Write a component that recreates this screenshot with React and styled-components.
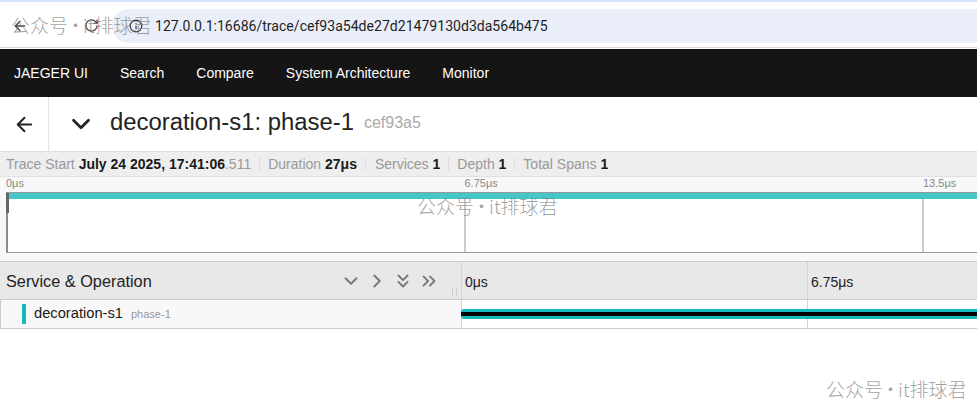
import React from 'react';
import styled, { createGlobalStyle } from 'styled-components';
import { ArrowLeft, ChevronDown, ChevronRight, ChevronsDown, ChevronsRight, Info, RotateCw } from 'lucide-react';

const GlobalStyle = createGlobalStyle`
  html, body {
    margin: 0;
    padding: 0;
    height: 100%;
    background: #fff;
    overflow: hidden;
  }
  body {
    font-family: "Liberation Sans", Arial, sans-serif;
    color: #1a1a1a;
  }
`;

const Page = styled.div`
  position: relative;
  width: 977px;
  height: 405px;
  overflow: hidden;
`;

const BrowserBar = styled.div`
  height: 48px;
  box-sizing: border-box;
  border-top: 2px solid #d3e3fd;
  border-bottom: 1px solid #d8d8d8;
  background: #fff;
  display: flex;
  align-items: center;
  padding: 4px 0 2px 12px;
  color: #474747;
`;

const BrowserIcons = styled.div`
  width: 100px;
  display: flex;
  gap: 56px;
  align-items: center;
`;

const UrlPill = styled.div`
  flex: 1;
  height: 34px;
  margin-right: -20px;
  border-radius: 17px;
  background: #e9eef8;
  display: flex;
  align-items: center;
  gap: 12px;
  padding-left: 17px;
  font-family: "Roboto", "Liberation Sans", sans-serif;
  font-size: 14.07px;
  color: #1f1f1f;
`;

const Nav = styled.nav`
  height: 48px;
  margin-top: 1px;
  background: #151515;
  display: flex;
  align-items: center;
  gap: 32px;
  padding-left: 14px;
  color: #fff;
  font-size: 14px;
`;

const TitleRow = styled.header`
  height: 55px;
  box-sizing: border-box;
  border-bottom: 1px solid #ddd;
  display: flex;
  align-items: center;
  padding-bottom: 5px;
`;

const BackCell = styled.div`
  width: 49px;
  height: 55px;
  margin-bottom: -5px;
  box-sizing: border-box;
  border-right: 1px solid #e4e4e4;
  display: flex;
  align-items: center;
  justify-content: center;
  color: #222;
`;

const TraceTitle = styled.h1`
  margin: 0 0 0 61px;
  font-size: 23.85px;
  font-weight: 400;
  color: #222;
`;

const TitleToggle = styled(ChevronDown)`
  position: absolute;
  left: 66px;
  top: 109px;
  color: #222;
`;

const TraceId = styled.small`
  margin-left: 10px;
  padding-top: 3px;
  font-size: 16px;
  color: #aaa;
`;

const InfoBar = styled.div`
  height: 25px;
  box-sizing: border-box;
  border-bottom: 1px solid #e2e2e2;
  background: #eee;
  display: flex;
  align-items: center;
  padding-left: 6px;
  font-size: 14px;
  color: #999;
`;

const InfoItem = styled.span`
  padding-right: 8px;
  margin-right: 8px;
  border-right: ${({ $last }) => ($last ? 'none' : '1px solid #ddd')};
  line-height: 14px;
  &:nth-child(2) {
    margin-right: 9px;
  }
  b {
    color: #1a1a1a;
  }
`;

const Minimap = styled.section`
  height: 84px;
  box-sizing: border-box;
  background: #f8f8f8;
`;

const TickRow = styled.div`
  height: 15px;
  display: grid;
  grid-template-columns: 458.5px 458.5px 60px;
  padding-left: 6px;
  font-size: 11px;
  line-height: 13px;
  color: #888;
`;

const Canvas = styled.div`
  position: relative;
  height: 61px;
  box-sizing: border-box;
  margin-left: 6px;
  background: #fff;
  border-left: 2px solid #8a8a8a;
  border-top: 1px solid #999;
  border-bottom: 1px solid #999;
  display: grid;
  grid-template-columns: 458px 458px 59px;
`;

const CanvasCell = styled.div`
  border-right: ${({ $line }) => ($line ? '2px solid #ccc' : 'none')};
  box-sizing: border-box;
`;

const CanvasBar = styled.div`
  position: absolute;
  left: 0;
  right: 0;
  top: 0;
  height: 6px;
  background: #45c6c9;
`;

const CanvasHandle = styled.div`
  position: absolute;
  left: -2px;
  top: 0;
  width: 3px;
  height: 20px;
  background: #666;
`;

const TimelineHeader = styled.div`
  height: 39px;
  box-sizing: border-box;
  border-top: 1px solid #ccc;
  border-bottom: 1px solid #ccc;
  background: #e8e8e8;
  display: flex;
`;

const NameColumn = styled.div`
  position: relative;
  width: 462px;
  box-sizing: border-box;
  border-right: 1px solid #d4d4d4;
  display: flex;
  align-items: center;
  justify-content: space-between;
  padding: 2px 21px 0 6px;
  font-size: 16.3px;
  color: #222;
`;

const Collapsers = styled.div`
  display: flex;
  gap: 4px;
  margin-top: -2px;
  color: #777;
`;

const Grip = styled.div`
  position: absolute;
  right: 4px;
  bottom: 3px;
  width: 3px;
  height: 9px;
  border-left: 1px solid #ccc;
  border-right: 1px solid #ccc;
`;

const TimeCell = styled.div`
  width: ${({ $w }) => $w}px;
  box-sizing: border-box;
  border-right: ${({ $line }) => ($line ? '1px solid #d4d4d4' : 'none')};
  display: flex;
  align-items: center;
  padding: 2px 0 0 3px;
  font-size: 14px;
  color: #222;
`;

const SpanRow = styled.div`
  height: 29px;
  box-sizing: border-box;
  border-bottom: 1px solid #ccc;
  display: flex;
`;

const SpanName = styled.div`
  width: 462px;
  box-sizing: border-box;
  background: #f8f8f8;
  border-left: 1px solid #ccc;
  border-right: 1px solid #d4d4d4;
  display: flex;
  align-items: center;
  padding-left: 21px;
`;

const ServiceMark = styled.span`
  width: 4px;
  height: 20px;
  background: #17b8be;
  margin-right: 8px;
`;

const ServiceName = styled.span`
  font-size: 14.7px;
  color: #1a1a1a;
  margin-right: 8px;
  margin-top: -2px;
`;

const OperationName = styled.span`
  font-size: 11px;
  color: #999;
`;

const SpanTrack = styled.div`
  position: relative;
  flex: 1;
  display: flex;
`;

const TrackCell = styled.div`
  width: 346px;
  box-sizing: border-box;
  border-right: 1px solid #d4d4d4;
`;

const SpanBar = styled.div`
  position: absolute;
  left: -1px;
  right: 0;
  top: 9px;
  height: 10px;
  border-radius: 3px 0 0 3px;
  background: #17b8be;
  &::after {
    content: '';
    position: absolute;
    left: 0;
    right: 0;
    top: 3px;
    height: 4px;
    background: #000;
  }
`;

const Watermark = styled.div`
  position: absolute;
  left: ${({ $x }) => $x}px;
  top: ${({ $y }) => $y}px;
  font-family: "Noto Sans CJK SC", "Noto Sans", sans-serif;
  font-size: 19px;
  font-weight: 300;
  line-height: 24px;
  white-space: nowrap;
  color: rgba(120, 120, 120, 0.7);
  pointer-events: none;
  span {
    margin: 0 -2px;
  }
`;

const mark = (
  <>
    公众号<span>·</span>it排球君
  </>
);

export default function App() {
  return (
    <Page>
      <GlobalStyle />
      <BrowserBar>
        <BrowserIcons>
          <ArrowLeft size={16} />
          <RotateCw size={15} />
        </BrowserIcons>
        <UrlPill>
          <Info size={14} color="#333" />
          127.0.0.1:16686/trace/cef93a54de27d21479130d3da564b475
        </UrlPill>
      </BrowserBar>
      <Nav>
        <span>JAEGER UI</span>
        <span>Search</span>
        <span>Compare</span>
        <span>System Architecture</span>
        <span>Monitor</span>
      </Nav>
      <TitleRow>
        <BackCell>
          <ArrowLeft size={23} strokeWidth={2} />
        </BackCell>
        <TitleToggle size={30} strokeWidth={2.2} />
        <TraceTitle>decoration-s1: phase-1</TraceTitle>
        <TraceId>cef93a5</TraceId>
      </TitleRow>
      <InfoBar>
        <InfoItem>Trace Start <b>July 24 2025, 17:41:06</b>.511</InfoItem>
        <InfoItem>Duration <b>27μs</b></InfoItem>
        <InfoItem>Services <b>1</b></InfoItem>
        <InfoItem>Depth <b>1</b></InfoItem>
        <InfoItem $last>Total Spans <b>1</b></InfoItem>
      </InfoBar>
      <Minimap>
        <TickRow>
          <span>0μs</span>
          <span>6.75μs</span>
          <span>13.5μs</span>
        </TickRow>
        <Canvas>
          <CanvasCell $line />
          <CanvasCell $line />
          <CanvasCell />
          <CanvasBar />
          <CanvasHandle />
        </Canvas>
      </Minimap>
      <TimelineHeader>
        <NameColumn>
          Service &amp; Operation
          <Collapsers>
            <ChevronDown size={22} />
            <ChevronRight size={22} />
            <ChevronsDown size={22} />
            <ChevronsRight size={22} />
          </Collapsers>
          <Grip />
        </NameColumn>
        <TimeCell $w={346} $line>0μs</TimeCell>
        <TimeCell $w={169}>6.75μs</TimeCell>
      </TimelineHeader>
      <SpanRow>
        <SpanName>
          <ServiceMark />
          <ServiceName>decoration-s1</ServiceName>
          <OperationName>phase-1</OperationName>
        </SpanName>
        <SpanTrack>
          <TrackCell />
          <SpanBar />
        </SpanTrack>
      </SpanRow>
      <Watermark $x={11} $y={13}>{mark}</Watermark>
      <Watermark $x={417} $y={194}>{mark}</Watermark>
      <Watermark $x={826} $y={377}>{mark}</Watermark>
    </Page>
  );
}
